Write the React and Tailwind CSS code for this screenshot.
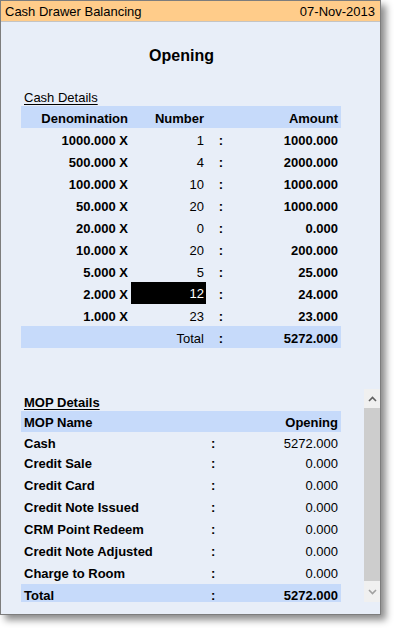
import React from "react";

const cashRows = [
  ["1000.000 X", "1", "1000.000"],
  ["500.000 X", "4", "2000.000"],
  ["100.000 X", "10", "1000.000"],
  ["50.000 X", "20", "1000.000"],
  ["20.000 X", "0", "0.000"],
  ["10.000 X", "20", "200.000"],
  ["5.000 X", "5", "25.000"],
  ["2.000 X", "12", "24.000"],
  ["1.000 X", "23", "23.000"],
];

const mopRows = [
  ["Cash", "5272.000"],
  ["Credit Sale", "0.000"],
  ["Credit Card", "0.000"],
  ["Credit Note Issued", "0.000"],
  ["CRM Point Redeem", "0.000"],
  ["Credit Note Adjusted", "0.000"],
  ["Charge to Room", "0.000"],
];

const cols = "grid grid-cols-[110px_75px_30px_105px] items-center pt-[3px]";
const mopCols = "grid grid-cols-[190px_20px_110px] items-center pt-[2px]";

export default function App() {
  return (
    <div className="w-[397px] h-[632px] bg-white font-['Liberation_Sans',Arial,sans-serif] text-[13px] text-black">
      <div className="w-[381px] h-[615px] border border-[#7d7d7d] bg-[#E8EEF8] flex flex-col shadow-[5px_5px_7px_rgba(0,0,0,0.45)]">
        {/* title bar */}
        <div className="h-[21px] shrink-0 bg-[#FFCC8A] flex items-center justify-between pl-[4px] pr-[5px] border-b border-[#c4c4c4] leading-none">
          <span>Cash Drawer Balancing</span>
          <span>07-Nov-2013</span>
        </div>

        <div className="mt-[24px] h-[20px] leading-[20px] text-center text-[16px] font-bold pr-[18px]">
          Opening
        </div>

        <div className="mt-[19px] h-[20px] leading-[20px] pt-[3px] pl-[23px]">
          <span className="underline underline-offset-[2px]">Cash Details</span>
        </div>

        {/* cash table */}
        <div className="mt-[1px] ml-[20px] w-[320px]">
          <div className={`${cols} h-[22px] bg-[#C6DAFA] font-bold`}>
            <span className="text-right pr-[3px]">Denomination</span>
            <span className="text-right pr-[2px]">Number</span>
            <span />
            <span className="text-right pr-[3px]">Amount</span>
          </div>
          {cashRows.map(([d, n, a]) => (
            <div key={d} className={`${cols} h-[22px]`}>
              <span className="text-right pr-[3px] font-bold">{d}</span>
              {n === "12" ? (
                <span className="text-right pr-[2px] h-[22px] leading-[22px] -mt-[3px] bg-black text-white pt-[1px]">
                  {n}
                </span>
              ) : (
                <span className="text-right pr-[2px]">{n}</span>
              )}
              <span className="text-center font-bold">:</span>
              <span className="text-right pr-[3px] font-bold">{a}</span>
            </div>
          ))}
          <div className={`${cols} h-[22px] bg-[#C6DAFA]`}>
            <span />
            <span className="text-right pr-[2px]">Total</span>
            <span className="text-center font-bold">:</span>
            <span className="text-right pr-[3px] font-bold">5272.000</span>
          </div>
        </div>

        {/* MOP scroll area */}
        <div className="mt-[41px] h-[213px] flex">
          <div className="flex-1 overflow-hidden">
            <div className="mt-[1px] h-[21px] leading-[21px] pt-[2px] pl-[23px]">
              <span className="underline underline-offset-[2px] font-bold">MOP Details</span>
            </div>
            <div className="ml-[20px] w-[320px]">
              <div className="h-[21px] bg-[#C6DAFA] flex items-center justify-between pt-[2px] pl-[3px] pr-[3px] font-bold">
                <span>MOP Name</span>
                <span>Opening</span>
              </div>
              {mopRows.map(([name, val], i) => (
                <div key={name} className={`${mopCols} ${i === 0 ? "h-[20px]" : "h-[22px]"}`}>
                  <span className="pl-[3px] font-bold">{name}</span>
                  <span className="font-bold">:</span>
                  <span className="text-right pr-[3px]">{val}</span>
                </div>
              ))}
              <div className={`${mopCols} h-[22px] bg-[#C6DAFA] font-bold`}>
                <span className="pl-[3px]">Total</span>
                <span>:</span>
                <span className="text-right pr-[3px]">5272.000</span>
              </div>
            </div>
          </div>
          <div className="w-[16px] flex flex-col">
            <div className="h-[19px] bg-[#F0F0F0] flex items-center justify-center">
              <svg width="9" height="6" viewBox="0 0 9 6">
                <path d="M1 5 L4.5 1.5 L8 5" stroke="#606060" strokeWidth="1.6" fill="none" />
              </svg>
            </div>
            <div className="flex-1 bg-[#CDCDCD]" />
            <div className="h-[21px] bg-[#F0F0F0] flex items-center justify-center">
              <svg width="9" height="6" viewBox="0 0 9 6">
                <path d="M1 1 L4.5 4.5 L8 1" stroke="#a0a0a0" strokeWidth="1.6" fill="none" />
              </svg>
            </div>
          </div>
        </div>
      </div>
    </div>
  );
}
